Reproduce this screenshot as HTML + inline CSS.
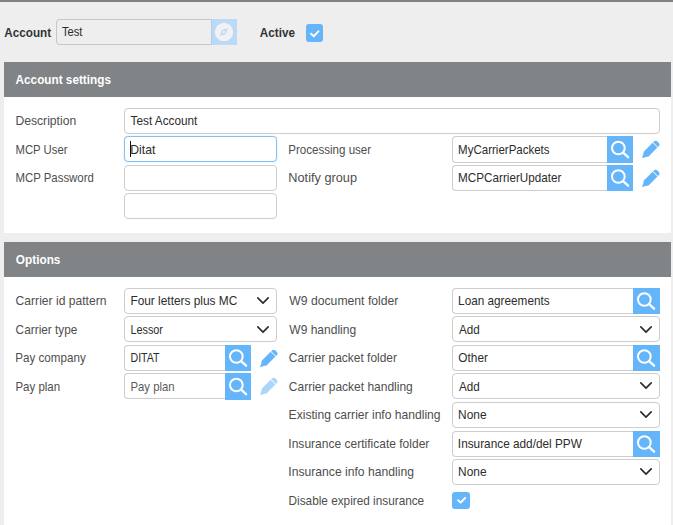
<!DOCTYPE html>
<html lang="en"><head><meta charset="utf-8"><title>Account</title>
<style>
html,body{margin:0;padding:0}
body{width:673px;height:525px;overflow:hidden;background:#eeeeee;font-family:"Liberation Sans", sans-serif;font-size:12.6px;color:#333;position:relative}
.a{position:absolute;box-sizing:border-box}
.topbar{left:0;top:0;width:673px;height:2px;background:#7f8385}
.panel{left:4px;width:667px;background:#fff}
.hdr{left:4px;width:667px;height:35px;background:#808486}
.t{position:absolute;white-space:nowrap;height:26px;line-height:26px;transform-origin:0 50%}
.t.n{color:#4e4e4e}
.t.v{color:#2c2c2c}
.t.ph{color:#5c5c5c}
.t.b{font-weight:bold;font-size:12.4px;color:#333}
.t.h{font-weight:bold;font-size:12.4px;color:#fff;height:35px;line-height:35px}
.inp{height:26px;border:1px solid #cdcdcd;border-radius:4px;background:#fff}
.inp.l{border-radius:4px 0 0 4px;border-right:none}
.inp.dis{background:#eeeeee;border-color:#c7c7c7}
.inp.foc{border-color:#86bff1;box-shadow:0 0 1.5px rgba(100,181,246,.45)}
.btn{width:26px;height:26px;background:#64b5f9}
.btn.dis{background:#bbdaf7;box-shadow:inset 1px 0 0 #aed0f0}
.btn svg,.pen svg,.chev svg,.chk svg{position:absolute;left:0;top:0}
.pen{width:20px;height:20px}
.chev{width:16px;height:10px}
.chk{border-radius:3px;background:#64b5f9}
.caret{background:#111}
</style></head>
<body>
<div class="a topbar"></div>
<div class="a inp l dis" style="left:56px;top:19px;width:155px;height:26px;"></div>
<div class="a btn dis" style="left:211px;top:19px;width:26px;height:26px;"><svg width="26" height="26" viewBox="0 0 26 26"><circle cx="13" cy="12.95" r="9.15" fill="#f2f2f2"/><path d="M17.1 9 L14.8 15.2 L8.6 17 L10.9 10.9 Z" fill="#c3def7"/><circle cx="12.9" cy="13" r="1.05" fill="#f2f2f2"/></svg></div>
<div class="a chk" style="left:306px;top:24px;width:17px;height:18px;"><svg width="17" height="18" viewBox="0 0 17 18"><path d="M5.10 9.80 L7.70 12.30 L12.50 7.40" fill="none" stroke="#fff" stroke-width="2" stroke-linecap="round" stroke-linejoin="round"/></svg></div>
<div class="a panel" style="left:4px;top:62px;width:667px;height:171px;"></div>
<div class="a hdr" style="left:4px;top:62px;"></div>
<div class="a inp" style="left:124px;top:108px;width:536px;height:26px;"></div>
<div class="a inp foc" style="left:124px;top:136px;width:153px;height:26px;"></div>
<div class="a caret" style="left:130px;top:141px;width:1px;height:16px;"></div>
<div class="a inp" style="left:124px;top:165px;width:153px;height:26px;"></div>
<div class="a inp" style="left:124px;top:193px;width:153px;height:26px;"></div>
<div class="a inp l" style="left:452px;top:136px;width:155px;height:27px;"></div>
<div class="a btn" style="left:607px;top:136px;width:26px;height:27px;"><svg width="26" height="27" viewBox="0 0 26 27"><circle cx="11.35" cy="12.0" r="6.35" fill="none" stroke="#fff" stroke-width="2"/><path d="M16.1 16.7 L21.1 21.2" stroke="#fff" stroke-width="2.3" stroke-linecap="round"/></svg></div>
<div class="a pen" style="left:641.8px;top:140px;"><svg width="20" height="20" viewBox="0 0 20 20"><g transform="translate(0.3,17.9) rotate(-45)" fill="#64b5f9"><path d="M0.3 0.5 Q0 0 0.3 -0.5 Q3.2 -1.5 5.4 -3.45 L18 -3.45 L18 3.45 L5.4 3.45 Q3.2 1.5 0.3 0.5 Z"/><path d="M18.75 -3.45 L19.5 -3.45 Q22.3 -3.45 22.3 -0.8 L22.3 0.8 Q22.3 3.45 19.5 3.45 L18.75 3.45 Z"/></g></svg></div>
<div class="a inp l" style="left:452px;top:165px;width:155px;height:26px;"></div>
<div class="a btn" style="left:607px;top:165px;width:26px;height:26px;"><svg width="26" height="26" viewBox="0 0 26 26"><circle cx="11.35" cy="11.5" r="6.35" fill="none" stroke="#fff" stroke-width="2"/><path d="M16.1 16.2 L21.1 20.7" stroke="#fff" stroke-width="2.3" stroke-linecap="round"/></svg></div>
<div class="a pen" style="left:641.8px;top:169.1px;"><svg width="20" height="20" viewBox="0 0 20 20"><g transform="translate(0.3,17.9) rotate(-45)" fill="#64b5f9"><path d="M0.3 0.5 Q0 0 0.3 -0.5 Q3.2 -1.5 5.4 -3.45 L18 -3.45 L18 3.45 L5.4 3.45 Q3.2 1.5 0.3 0.5 Z"/><path d="M18.75 -3.45 L19.5 -3.45 Q22.3 -3.45 22.3 -0.8 L22.3 0.8 Q22.3 3.45 19.5 3.45 L18.75 3.45 Z"/></g></svg></div>
<div class="a panel" style="left:4px;top:242px;width:667px;height:283px;"></div>
<div class="a hdr" style="left:4px;top:242px;"></div>
<div class="a inp" style="left:124px;top:288px;width:153px;height:26px;"></div>
<div class="a chev" style="left:255.3px;top:296.1px;"><svg width="16" height="10" viewBox="0 0 16 10"><path d="M2.8 1.9 L8 7.1 L13.2 1.9" fill="none" stroke="#2a2a2a" stroke-width="1.6" stroke-linecap="round" stroke-linejoin="round"/></svg></div>
<div class="a inp" style="left:124px;top:316px;width:153px;height:26px;"></div>
<div class="a chev" style="left:255.3px;top:325px;"><svg width="16" height="10" viewBox="0 0 16 10"><path d="M2.8 1.9 L8 7.1 L13.2 1.9" fill="none" stroke="#2a2a2a" stroke-width="1.6" stroke-linecap="round" stroke-linejoin="round"/></svg></div>
<div class="a inp l" style="left:124px;top:345px;width:101px;height:26px;"></div>
<div class="a btn" style="left:225px;top:345px;width:26px;height:26px;"><svg width="26" height="26" viewBox="0 0 26 26"><circle cx="11.35" cy="11.5" r="6.35" fill="none" stroke="#fff" stroke-width="2"/><path d="M16.1 16.2 L21.1 20.7" stroke="#fff" stroke-width="2.3" stroke-linecap="round"/></svg></div>
<div class="a pen" style="left:259.8px;top:349.1px;"><svg width="20" height="20" viewBox="0 0 20 20"><g transform="translate(0.3,17.9) rotate(-45)" fill="#64b5f9"><path d="M0.3 0.5 Q0 0 0.3 -0.5 Q3.2 -1.5 5.4 -3.45 L18 -3.45 L18 3.45 L5.4 3.45 Q3.2 1.5 0.3 0.5 Z"/><path d="M18.75 -3.45 L19.5 -3.45 Q22.3 -3.45 22.3 -0.8 L22.3 0.8 Q22.3 3.45 19.5 3.45 L18.75 3.45 Z"/></g></svg></div>
<div class="a inp l" style="left:124px;top:373px;width:101px;height:26px;"></div>
<div class="a btn" style="left:225px;top:373px;width:26px;height:27px;"><svg width="26" height="27" viewBox="0 0 26 27"><circle cx="11.35" cy="12.0" r="6.35" fill="none" stroke="#fff" stroke-width="2"/><path d="M16.1 16.7 L21.1 21.2" stroke="#fff" stroke-width="2.3" stroke-linecap="round"/></svg></div>
<div class="a pen" style="left:259.8px;top:377.1px;"><svg width="20" height="20" viewBox="0 0 20 20"><g transform="translate(0.3,17.9) rotate(-45)" fill="#acd5fb"><path d="M0.3 0.5 Q0 0 0.3 -0.5 Q3.2 -1.5 5.4 -3.45 L18 -3.45 L18 3.45 L5.4 3.45 Q3.2 1.5 0.3 0.5 Z"/><path d="M18.75 -3.45 L19.5 -3.45 Q22.3 -3.45 22.3 -0.8 L22.3 0.8 Q22.3 3.45 19.5 3.45 L18.75 3.45 Z"/></g></svg></div>
<div class="a inp l" style="left:452px;top:288px;width:181px;height:26px;"></div>
<div class="a btn" style="left:633px;top:288px;width:27px;height:26px;"><svg width="26" height="26" viewBox="0 0 26 26"><circle cx="11.35" cy="11.5" r="6.35" fill="none" stroke="#fff" stroke-width="2"/><path d="M16.1 16.2 L21.1 20.7" stroke="#fff" stroke-width="2.3" stroke-linecap="round"/></svg></div>
<div class="a inp" style="left:452px;top:316px;width:207.5px;height:26px;"></div>
<div class="a chev" style="left:637.8px;top:325px;"><svg width="16" height="10" viewBox="0 0 16 10"><path d="M2.8 1.9 L8 7.1 L13.2 1.9" fill="none" stroke="#2a2a2a" stroke-width="1.6" stroke-linecap="round" stroke-linejoin="round"/></svg></div>
<div class="a inp l" style="left:452px;top:345px;width:181px;height:26px;"></div>
<div class="a btn" style="left:633px;top:345px;width:27px;height:26px;"><svg width="26" height="26" viewBox="0 0 26 26"><circle cx="11.35" cy="11.5" r="6.35" fill="none" stroke="#fff" stroke-width="2"/><path d="M16.1 16.2 L21.1 20.7" stroke="#fff" stroke-width="2.3" stroke-linecap="round"/></svg></div>
<div class="a inp" style="left:452px;top:373px;width:207.5px;height:26px;"></div>
<div class="a chev" style="left:637.8px;top:381.1px;"><svg width="16" height="10" viewBox="0 0 16 10"><path d="M2.8 1.9 L8 7.1 L13.2 1.9" fill="none" stroke="#2a2a2a" stroke-width="1.6" stroke-linecap="round" stroke-linejoin="round"/></svg></div>
<div class="a inp" style="left:452px;top:402px;width:207.5px;height:26px;"></div>
<div class="a chev" style="left:637.8px;top:410.1px;"><svg width="16" height="10" viewBox="0 0 16 10"><path d="M2.8 1.9 L8 7.1 L13.2 1.9" fill="none" stroke="#2a2a2a" stroke-width="1.6" stroke-linecap="round" stroke-linejoin="round"/></svg></div>
<div class="a inp l" style="left:452px;top:431px;width:181px;height:26px;"></div>
<div class="a btn" style="left:633px;top:431px;width:27px;height:26px;"><svg width="26" height="26" viewBox="0 0 26 26"><circle cx="11.35" cy="11.5" r="6.35" fill="none" stroke="#fff" stroke-width="2"/><path d="M16.1 16.2 L21.1 20.7" stroke="#fff" stroke-width="2.3" stroke-linecap="round"/></svg></div>
<div class="a inp" style="left:452px;top:459px;width:207.5px;height:26px;"></div>
<div class="a chev" style="left:637.8px;top:467.1px;"><svg width="16" height="10" viewBox="0 0 16 10"><path d="M2.8 1.9 L8 7.1 L13.2 1.9" fill="none" stroke="#2a2a2a" stroke-width="1.6" stroke-linecap="round" stroke-linejoin="round"/></svg></div>
<div class="a chk" style="left:452px;top:492px;width:18px;height:17px;"><svg width="18" height="17" viewBox="0 0 18 17"><path d="M6.20 8.30 L8.62 10.62 L13.08 6.07" fill="none" stroke="#fff" stroke-width="2" stroke-linecap="round" stroke-linejoin="round"/></svg></div>
<div id="account" class="t b" style="left:0;top:19px;transform:translate(4.35px,1px) scaleX(0.9431)">Account</div>
<div id="active" class="t b" style="left:0;top:19px;transform:translate(259.87px,1px) scaleX(0.9425)">Active</div>
<div id="h1" class="t h" style="left:0;top:62px;transform:translate(15.56px,1px) scaleX(0.9489)">Account settings</div>
<div id="h2" class="t h" style="left:0;top:242px;transform:translate(15.77px,1px) scaleX(0.9543)">Options</div>
<div id="desc" class="t n" style="left:0;top:108px;transform:translate(15.38px,0px) scaleX(0.9654)">Description</div>
<div id="mcpu" class="t n" style="left:0;top:136px;transform:translate(15.45px,1px) scaleX(0.8994)">MCP User</div>
<div id="mcpp" class="t n" style="left:0;top:165px;transform:translate(15.44px,0px) scaleX(0.9057)">MCP Password</div>
<div id="proc" class="t n" style="left:0;top:136px;transform:translate(288.18px,1px) scaleX(0.9189)">Processing user</div>
<div id="notif" class="t n" style="left:0;top:165px;transform:translate(288.33px,0px) scaleX(1.0108)">Notify group</div>
<div id="cip" class="t n" style="left:0;top:288px;transform:translate(15.61px,0px) scaleX(0.9608)">Carrier id pattern</div>
<div id="ctype" class="t n" style="left:0;top:316px;transform:translate(15.62px,1px) scaleX(0.9396)">Carrier type</div>
<div id="payc" class="t n" style="left:0;top:345px;transform:translate(15.18px,0px) scaleX(0.9242)">Pay company</div>
<div id="payp" class="t n" style="left:0;top:373px;transform:translate(15.44px,1px) scaleX(0.9113)">Pay plan</div>
<div id="r0" class="t n" style="left:0;top:288px;transform:translate(289.30px,0px) scaleX(0.9678)">W9 document folder</div>
<div id="r1" class="t n" style="left:0;top:316px;transform:translate(289.30px,1px) scaleX(0.9548)">W9 handling</div>
<div id="r2" class="t n" style="left:0;top:345px;transform:translate(288.82px,0px) scaleX(0.9475)">Carrier packet folder</div>
<div id="r3" class="t n" style="left:0;top:373px;transform:translate(288.82px,1px) scaleX(0.9520)">Carrier packet handling</div>
<div id="r4" class="t n" style="left:0;top:402px;transform:translate(288.58px,0px) scaleX(0.9608)">Existing carrier info handling</div>
<div id="r5" class="t n" style="left:0;top:431px;transform:translate(288.35px,0px) scaleX(0.9544)">Insurance certificate folder</div>
<div id="r6" class="t n" style="left:0;top:459px;transform:translate(288.35px,0px) scaleX(0.9639)">Insurance info handling</div>
<div id="r7" class="t n" style="left:0;top:488px;transform:translate(288.60px,0px) scaleX(0.9356)">Disable expired insurance</div>
<div id="v_test" class="t v" style="left:0;top:19px;transform:translate(62.01px,0px) scaleX(0.8856)">Test</div>
<div id="v_desc" class="t v" style="left:0;top:108px;transform:translate(130.62px,0px) scaleX(0.9347)">Test Account</div>
<div id="v_ditat" class="t v" style="left:0;top:136px;transform:translate(130.20px,1px) scaleX(0.9710)">Ditat</div>
<div id="v_mcp" class="t v" style="left:0;top:136px;transform:translate(458.12px,1px) scaleX(0.9139)">MyCarrierPackets</div>
<div id="v_upd" class="t v" style="left:0;top:165px;transform:translate(458.11px,0px) scaleX(0.9277)">MCPCarrierUpdater</div>
<div id="v_four" class="t v" style="left:0;top:288px;transform:translate(130.41px,0px) scaleX(0.9427)">Four letters plus MC</div>
<div id="v_less" class="t v" style="left:0;top:316px;transform:translate(130.49px,1px) scaleX(0.8583)">Lessor</div>
<div id="v_ditat2" class="t v" style="left:0;top:345px;transform:translate(130.50px,0px) scaleX(0.8436)">DITAT</div>
<div id="v_pp" class="t v ph" style="left:0;top:373px;transform:translate(130.47px,1px) scaleX(0.9006)">Pay plan</div>
<div id="v_loan" class="t v" style="left:0;top:288px;transform:translate(458.11px,0px) scaleX(0.9336)">Loan agreements</div>
<div id="v_add1" class="t v" style="left:0;top:316px;transform:translate(459.05px,1px) scaleX(0.9261)">Add</div>
<div id="v_other" class="t v" style="left:0;top:345px;transform:translate(458.33px,0px) scaleX(0.9389)">Other</div>
<div id="v_add2" class="t v" style="left:0;top:373px;transform:translate(459.05px,1px) scaleX(0.9261)">Add</div>
<div id="v_none1" class="t v" style="left:0;top:402px;transform:translate(458.11px,0px) scaleX(0.9441)">None</div>
<div id="v_ins" class="t v" style="left:0;top:431px;transform:translate(457.87px,0px) scaleX(0.9371)">Insurance add/del PPW</div>
<div id="v_none2" class="t v" style="left:0;top:459px;transform:translate(458.11px,0px) scaleX(0.9441)">None</div>
</body></html>
